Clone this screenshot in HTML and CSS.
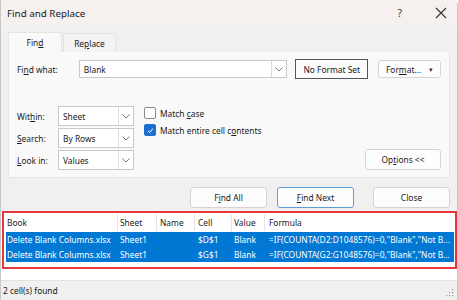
FILE: index.html
```html
<!DOCTYPE html>
<html lang="en">
<head>
    <meta charset="UTF-8">
    <title>Find and Replace</title>
    <link rel="stylesheet" href="styles.css">
</head>
<body>
    <div class="window">
        <!-- title bar -->
        <div class="titlebar">
            <span class="title">Find and Replace</span>
            <span class="help">?</span>
            <svg class="close-x" width="12" height="12" viewBox="0 0 12 12">
                <path d="M1 1 L11 11 M11 1 L1 11" stroke="#333" stroke-width="1.1" fill="none"/>
            </svg>
        </div>

        <div class="content">
            <div class="tabs">
                <div class="tab active">Fin<u>d</u></div>
                <div class="tab">Re<u>p</u>lace</div>
            </div>

            <div class="panel">
                <div class="find-row">
                    <label class="label">Fi<u>n</u>d what:</label>
                    <div class="combo find-input">
                        <span class="combo-text">Blank</span>
                        <span class="combo-arrow">
                            <svg width="8" height="5" viewBox="0 0 8 5"><path d="M0.5 0.5 L4 4 L7.5 0.5" stroke="#777" fill="none"/></svg>
                        </span>
                    </div>
                    <div class="format-set">No Format Set</div>
                    <div class="btn format-btn">For<u>m</u>at...<span class="caret">&#9662;</span></div>
                </div>

                <div class="options">
                    <div class="selects">
                        <div class="select-row">
                            <label class="label short">Wit<u>h</u>in:</label>
                            <div class="combo select">
                                <span class="combo-text">Sheet</span>
                                <span class="combo-arrow">
                                    <svg width="8" height="5" viewBox="0 0 8 5"><path d="M0.5 0.5 L4 4 L7.5 0.5" stroke="#777" fill="none"/></svg>
                                </span>
                            </div>
                        </div>
                        <div class="select-row">
                            <label class="label short"><u>S</u>earch:</label>
                            <div class="combo select">
                                <span class="combo-text">By Rows</span>
                                <span class="combo-arrow">
                                    <svg width="8" height="5" viewBox="0 0 8 5"><path d="M0.5 0.5 L4 4 L7.5 0.5" stroke="#777" fill="none"/></svg>
                                </span>
                            </div>
                        </div>
                        <div class="select-row">
                            <label class="label short"><u>L</u>ook in:</label>
                            <div class="combo select">
                                <span class="combo-text">Values</span>
                                <span class="combo-arrow">
                                    <svg width="8" height="5" viewBox="0 0 8 5"><path d="M0.5 0.5 L4 4 L7.5 0.5" stroke="#777" fill="none"/></svg>
                                </span>
                            </div>
                        </div>
                    </div>

                    <div class="checks">
                        <div class="check-row">
                            <span class="checkbox"></span>
                            <span>Match <u>c</u>ase</span>
                        </div>
                        <div class="check-row">
                            <span class="checkbox checked">
                                <svg width="9" height="9" viewBox="0 0 9 9"><path d="M2 4.8 L3.8 6.5 L7 2.5" stroke="#fff" stroke-width="1" fill="none"/></svg>
                            </span>
                            <span>Match entire cell c<u>o</u>ntents</span>
                        </div>
                    </div>

                    <div class="btn options-btn">Op<u>t</u>ions &lt;&lt;</div>
                </div>
            </div>

            <div class="actions">
                <div class="btn action">F<u>i</u>nd All</div>
                <div class="btn action primary"><u>F</u>ind Next</div>
                <div class="btn action">Close</div>
            </div>
        </div>

        <div class="results">
            <div class="highlight">
                <div class="row head">
                    <span class="col c-book">Book</span>
                    <span class="col c-sheet">Sheet</span>
                    <span class="col c-name">Name</span>
                    <span class="col c-cell">Cell</span>
                    <span class="col c-value">Value</span>
                    <span class="col c-formula">Formula</span>
                </div>
                <div class="row selected">
                    <span class="col c-book">Delete Blank Columns.xlsx</span>
                    <span class="col c-sheet">Sheet1</span>
                    <span class="col c-name"></span>
                    <span class="col c-cell">$D$1</span>
                    <span class="col c-value">Blank</span>
                    <span class="col c-formula">=IF(COUNTA(D2:D1048576)=0,"Blank","Not B...</span>
                </div>
                <div class="row selected">
                    <span class="col c-book">Delete Blank Columns.xlsx</span>
                    <span class="col c-sheet">Sheet1</span>
                    <span class="col c-name"></span>
                    <span class="col c-cell">$G$1</span>
                    <span class="col c-value">Blank</span>
                    <span class="col c-formula">=IF(COUNTA(G2:G1048576)=0,"Blank","Not B...</span>
                </div>
            </div>
        </div>

        <div class="status">
            <span>2 cell(s) found</span>
            <svg class="grip" width="8" height="8" viewBox="0 0 8 8">
                <rect x="6" y="0" width="1.2" height="1.2" fill="#999"/>
                <rect x="3" y="3" width="1.2" height="1.2" fill="#999"/>
                <rect x="6" y="3" width="1.2" height="1.2" fill="#999"/>
                <rect x="0" y="6" width="1.2" height="1.2" fill="#999"/>
                <rect x="3" y="6" width="1.2" height="1.2" fill="#999"/>
                <rect x="6" y="6" width="1.2" height="1.2" fill="#999"/>
            </svg>
        </div>
    </div>
</body>
</html>
```

FILE: styles.css
```css
:root {
    --dlg-bg: #f0f0f0;
    --title-bg: #f6f0ee;
    --panel-bg: #f9f9f9;
    --border: #d6d6d6;
    --blue: #0078d4;
    --red: #e8383d;
    --text: #1a1a1a;
}

* {
    box-sizing: border-box;
}

body {
    margin: 0;
    background: #ffffff;
    font-family: 'Noto Sans', 'Open Sans', Arial, sans-serif;
    font-size: 8.4px;
    color: var(--text);
}

u {
    text-decoration: underline;
    text-underline-offset: 1px;
}

.window {
    width: 458px;
    height: 300px;
    background: var(--dlg-bg);
    border-left: 1px solid #c8c8c8;
    border-right: 1px solid #c8c8c8;
    border-top-right-radius: 6px;
    display: flex;
    flex-direction: column;
    overflow: hidden;
}

/* title bar */
.titlebar {
    height: 26px;
    background: var(--title-bg);
    display: flex;
    align-items: center;
    padding: 0 0 0 6px;
    flex-shrink: 0;
}

.title {
    font-size: 9.8px;
    flex: 1;
}

.help {
    font-size: 10.5px;
    color: #333;
    margin-right: 33px;
}

.close-x {
    margin-right: 10px;
}

.content {
    padding: 6px 7px 0 7px;
}

/* tabs */
.tabs {
    display: flex;
    align-items: flex-end;
    height: 20px;
}

.tab {
    height: 19px;
    width: 53px;
    display: flex;
    align-items: center;
    justify-content: center;
    background: #f3f3f3;
    border: 1px solid #e4e4e4;
    border-bottom: none;
    margin-left: 1px;
}

.tab.active {
    height: 20px;
    width: 54px;
    margin-left: 0;
    background: var(--panel-bg);
}

.panel {
    height: 126px;
    width: 442px;
    background: var(--panel-bg);
    border: 1px solid #e4e4e4;
    border-top: none;
    padding: 7px 8px 0 8px;
}

.find-row {
    display: flex;
    align-items: center;
    height: 20px;
}

.label {
    width: 62px;
}

.label.short {
    width: 41px;
}

.combo {
    height: 18px;
    background: #ffffff;
    border: 1px solid #c9c9c9;
    display: flex;
    align-items: center;
}

.combo-text {
    flex: 1;
    padding-left: 4px;
}

.combo-arrow {
    width: 15px;
    height: 100%;
    border-left: 1px solid #dcdcdc;
    display: flex;
    align-items: center;
    justify-content: center;
}

.find-input {
    width: 209px;
}

.format-set {
    margin-left: 8px;
    width: 73px;
    height: 20px;
    border: 1px solid #555;
    background: #fbfbfb;
    display: flex;
    align-items: center;
    justify-content: center;
}

.btn {
    background: #fdfdfd;
    border: 1px solid #d4d4d4;
    border-radius: 3px;
    display: flex;
    align-items: center;
    justify-content: center;
}

.format-btn {
    margin-left: 10px;
    width: 63px;
    height: 18px;
    position: relative;
}

.caret {
    font-size: 7px;
    margin-left: 8px;
    color: #333;
}

/* options area */
.options {
    display: flex;
    margin-top: 27px;
}

.selects {
    display: flex;
    flex-direction: column;
    gap: 2px;
}

.select-row {
    display: flex;
    align-items: center;
}

.select {
    width: 76px;
    height: 20px;
}

.checks {
    margin-left: 10px;
    display: flex;
    flex-direction: column;
    gap: 5px;
    padding-top: 1px;
}

.check-row {
    display: flex;
    align-items: center;
    gap: 4px;
}

.checkbox {
    width: 12px;
    height: 12px;
    border: 1px solid #8a8a8a;
    border-radius: 2px;
    background: #ffffff;
    display: flex;
    align-items: center;
    justify-content: center;
}

.checkbox.checked {
    background: #1a6fcf;
    border-color: #1a6fcf;
}

.options-btn {
    margin-left: auto;
    align-self: flex-end;
    width: 76px;
    height: 21px;
}

/* buttons */
.actions {
    display: flex;
    justify-content: flex-end;
    gap: 10px;
    padding: 9px 0 3px 0;
}

.action {
    width: 77px;
    height: 21px;
}

.action.primary {
    border: 1px solid #5a9ee0;
}

.action.primary + .action {
    margin-left: 9px;
}

/* result list */
.results {
    height: 69px;
    background: #ffffff;
    border-top: 1px solid #d0d0d0;
    padding: 0 0 0 1px;
}

.highlight {
    height: 58px;
    border: 2px solid var(--red);
    padding: 1px 1px 0 2px;
    margin-top: -1px;
}

.row {
    display: flex;
    height: 15px;
    align-items: center;
    white-space: nowrap;
}

.row.head {
    height: 17px;
    margin-bottom: 1px;
}

.row.selected {
    background: var(--blue);
    color: #ffffff;
}

.col {
    padding-left: 1px;
    overflow: hidden;
}

.row.head .col {
    height: 100%;
    display: flex;
    align-items: center;
    border-right: 1px solid #e6e6e6;
}

.c-book { width: 112px; }
.c-sheet { width: 39px; padding-left: 2px; }
.c-name { width: 38px; padding-left: 3px; }
.c-cell { width: 37px; padding-left: 3px; }
.c-value { width: 33px; padding-left: 2px; }
.c-formula { flex: 1; padding-left: 4px; }

.row.head .c-formula {
    border-right: none;
}

.status {
    flex: 1;
    background: var(--dlg-bg);
    border-top: 1px solid #e2e2e2;
    display: flex;
    align-items: center;
    padding: 0 2px 0 2px;
    position: relative;
}

.grip {
    position: absolute;
    right: 3px;
    bottom: 3px;
}
```
